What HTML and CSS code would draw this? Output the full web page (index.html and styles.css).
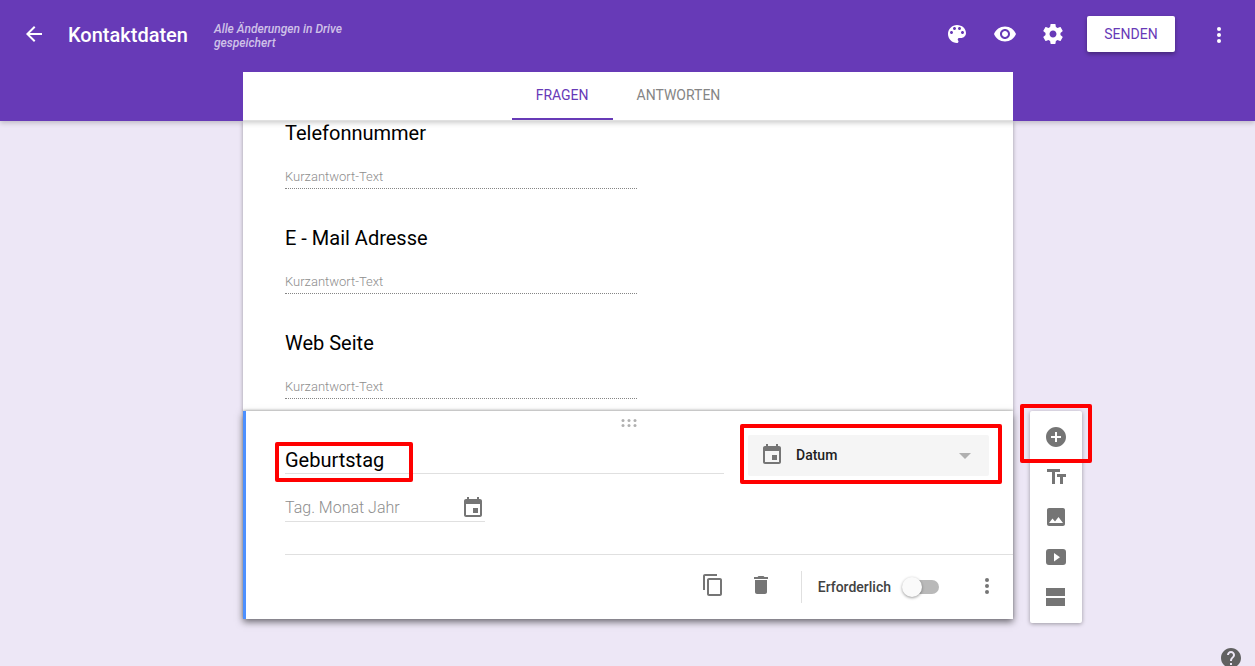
FILE: index.html
```
<!DOCTYPE html>
<html lang="de">
<head>
  <meta charset="UTF-8" />
  <meta name="viewport" content="width=device-width, initial-scale=1.0"/>
  <title>Kontaktdaten</title>
  <link rel="stylesheet" href="styles.css">
</head>
<body>
  <header class="header">
    <div class="topbar">
      <button class="icon-btn" type="button" aria-label="Zurück">
        <svg viewBox="0 0 24 24"><path d="M20 11H7.83l5.59-5.59L12 4l-8 8 8 8 1.41-1.41L7.83 13H20v-2z"/></svg>
      </button>
      <h1 class="form-name">Kontaktdaten</h1>
      <p class="save-status">Alle Änderungen in Drive gespeichert</p>

      <div class="tools">
        <button class="icon-btn" type="button" aria-label="Farbpalette">
          <svg viewBox="0 0 24 24"><path d="M12 3c-4.970 0-9 4.030-9 9s4.030 9 9 9c.83 0 1.500-.67 1.500-1.500 0-.39-.15-.74-.39-1.010-.23-.26-.38-.61-.38-.99 0-.83.67-1.500 1.500-1.500H16c2.760 0 5-2.240 5-5 0-4.420-4.030-8-9-8zm-5.500 9c-.83 0-1.500-.67-1.500-1.500S5.670 9 6.500 9 8 9.670 8 10.500 7.330 12 6.500 12zm3-4C8.670 8 8 7.330 8 6.500S8.670 5 9.500 5s1.500.67 1.500 1.500S10.330 8 9.500 8zm5 0c-.83 0-1.500-.67-1.500-1.500S13.670 5 14.500 5s1.500.67 1.500 1.500S15.330 8 14.500 8zm3 4c-.83 0-1.500-.67-1.500-1.500S16.670 9 17.500 9s1.500.67 1.500 1.500-.67 1.500-1.500 1.500z"/></svg>
        </button>
        <button class="icon-btn" type="button" aria-label="Vorschau">
          <svg viewBox="0 0 24 24"><path d="M12 4.500C7 4.500 2.730 7.610 1 12c1.730 4.390 6 7.500 11 7.500s9.270-3.110 11-7.500c-1.730-4.390-6-7.500-11-7.500zM12 17c-2.760 0-5-2.240-5-5s2.240-5 5-5 5 2.240 5 5-2.240 5-5 5zm0-8c-1.660 0-3 1.340-3 3s1.340 3 3 3 3-1.340 3-3-1.340-3-3-3z"/></svg>
        </button>
        <button class="icon-btn" type="button" aria-label="Einstellungen">
          <svg viewBox="0 0 24 24"><path d="M19.430 12.980c.04-.32.07-.64.07-.98s-.03-.66-.07-.98l2.110-1.650c.19-.15.24-.42.12-.64l-2-3.460c-.12-.22-.39-.3-.61-.22l-2.490 1c-.52-.4-1.080-.73-1.690-.98l-.38-2.650C14.460 2.180 14.250 2 14 2h-4c-.25 0-.46.18-.49.42l-.38 2.650c-.61.25-1.170.59-1.690.98l-2.490-1c-.23-.09-.49 0-.61.22l-2 3.460c-.13.22-.07.49.12.64l2.110 1.650c-.04.32-.07.65-.07.98s.03.66.07.98l-2.110 1.650c-.19.15-.24.42-.12.64l2 3.460c.12.22.39.3.61.22l2.490-1c.52.4 1.080.73 1.690.98l.38 2.650c.03.24.24.42.49.42h4c.25 0 .46-.18.49-.42l.38-2.650c.61-.25 1.170-.59 1.690-.98l2.490 1c.23.09.49 0 .61-.22l2-3.460c.12-.22.07-.49-.12-.64l-2.110-1.650zM12 15.500c-1.930 0-3.500-1.570-3.500-3.500s1.570-3.500 3.500-3.500 3.500 1.570 3.500 3.500-1.570 3.500-3.500 3.500z"/></svg>
        </button>
      </div>
      <button class="send-btn" type="button">SENDEN</button>
      <button class="icon-btn" type="button" aria-label="Mehr">
        <svg viewBox="0 0 24 24"><circle cx="12" cy="7" r="2"/><circle cx="12" cy="13" r="2"/><circle cx="12" cy="19" r="2"/></svg>
      </button>
    </div>

    <div class="columns">
      <nav class="tabs">
        <a class="tab active" href="#fragen">FRAGEN</a>
        <a class="tab" href="#antworten">ANTWORTEN</a>
      </nav>
    </div>
  </header>

  <main class="columns" id="fragen">
    <section class="questions">
      <div class="question">
        <label for="telefon">Telefonnummer</label>
        <input id="telefon" type="text" placeholder="Kurzantwort-Text" readonly>
      </div>
      <div class="question">
        <label for="email">E - Mail Adresse</label>
        <input id="email" type="text" placeholder="Kurzantwort-Text" readonly>
      </div>
      <div class="question">
        <label for="web">Web Seite</label>
        <input id="web" type="text" placeholder="Kurzantwort-Text" readonly>
      </div>
    </section>

    <section class="card">
      <div class="drag-handle">
        <svg viewBox="0 0 16 8">
          <circle cx="2" cy="1.500" r="1.500"/><circle cx="8" cy="1.500" r="1.500"/><circle cx="14" cy="1.500" r="1.500"/>
          <circle cx="2" cy="6.500" r="1.500"/><circle cx="8" cy="6.500" r="1.500"/><circle cx="14" cy="6.500" r="1.500"/>
        </svg>
      </div>

      <div class="card-top">
        <div class="title-field">
          <input type="text" value="Geburtstag" aria-label="Frage">
          <span class="mark mark-title"></span>
        </div>
        <div class="type-field">
          <svg class="type-icon" viewBox="0 0 24 24"><path d="M17 12h-5v5h5v-5zM16 1v2H8V1H6v2H5c-1.100 0-2 .9-2 2v14c0 1.100.9 2 2 2h14c1.100 0 2-.9 2-2V5c0-1.100-.9-2-2-2h-1V1h-2zm3 18H5V8h14v11z"/></svg>
          <select aria-label="Fragetyp">
            <option>Datum</option>
            <option>Kurzantwort</option>
          </select>
          <svg class="type-arrow" viewBox="0 0 12 6"><path d="M0 0h12L6 6z"/></svg>
          <span class="mark mark-type"></span>
        </div>
      </div>

      <div class="date-field">
        <input type="text" placeholder="Tag. Monat Jahr" aria-label="Datum" readonly>
        <svg viewBox="0 0 24 24"><path d="M17 12h-5v5h5v-5zM16 1v2H8V1H6v2H5c-1.100 0-2 .9-2 2v14c0 1.100.9 2 2 2h14c1.100 0 2-.9 2-2V5c0-1.100-.9-2-2-2h-1V1h-2zm3 18H5V8h14v11z"/></svg>
      </div>

      <div class="card-footer">
        <div class="card-actions">
          <button class="icon-btn" type="button" aria-label="Duplizieren">
            <svg viewBox="0 0 24 24"><path d="M16 1H4c-1.100 0-2 .9-2 2v14h2V3h12V1zm3 4H8c-1.100 0-2 .9-2 2v14c0 1.100.9 2 2 2h11c1.100 0 2-.9 2-2V7c0-1.100-.9-2-2-2zm0 16H8V7h11v14z"/></svg>
          </button>
          <button class="icon-btn" type="button" aria-label="Löschen">
            <svg viewBox="0 0 24 24"><path d="M6 19c0 1.100.9 2 2 2h8c1.100 0 2-.9 2-2V7H6v12zM19 4h-3.500l-1-1h-5l-1 1H5v2h14V4z"/></svg>
          </button>
        </div>
        <label class="required">
          Erforderlich
          <input class="switch" type="checkbox">
        </label>
        <button class="icon-btn" type="button" aria-label="Weitere Optionen">
          <svg viewBox="0 0 24 24"><circle cx="12" cy="5" r="2"/><circle cx="12" cy="11" r="2"/><circle cx="12" cy="17" r="2"/></svg>
        </button>
      </div>
    </section>

    <aside class="toolbar">
      <button class="icon-btn" type="button" aria-label="Frage hinzufügen">
        <svg viewBox="0 0 24 24"><path d="M12 2C6.480 2 2 6.480 2 12s4.480 10 10 10 10-4.480 10-10S17.520 2 12 2zm5 11h-4v4h-2v-4H7v-2h4V7h2v4h4v2z"/></svg>
      </button>
      <button class="icon-btn" type="button" aria-label="Titel hinzufügen">
        <svg viewBox="0 0 24 24"><path d="M3 4v3h5v12h3V7h5V4zM13 9v3h3v7h3v-7h3V9z"/></svg>
      </button>
      <button class="icon-btn" type="button" aria-label="Bild hinzufügen">
        <svg viewBox="0 0 24 24"><path d="M21 19V5c0-1.100-.9-2-2-2H5c-1.100 0-2 .9-2 2v14c0 1.100.9 2 2 2h14c1.100 0 2-.9 2-2zM8.500 13.500l2.500 3L14.500 12l4.500 6H5l3.500-4.500z"/></svg>
      </button>
      <button class="icon-btn" type="button" aria-label="Video hinzufügen">
        <svg viewBox="0 0 24 24"><path d="M5 4h14q3 0 3 3v10q0 3-3 3H5q-3 0-3-3V7q0-3 3-3zM10 8v8.500l6-4.200z"/></svg>
      </button>
      <button class="icon-btn" type="button" aria-label="Abschnitt hinzufügen">
        <svg viewBox="0 0 24 24"><path d="M2 3h19v8H2zM2 13h19v8H2z"/></svg>
      </button>
      <span class="mark mark-add"></span>
    </aside>
  </main>

  <button class="icon-btn help-btn" type="button" aria-label="Hilfe">
    <svg viewBox="0 0 24 24"><path d="M12 2C6.480 2 2 6.480 2 12s4.480 10 10 10 10-4.480 10-10S17.520 2 12 2zm1 17h-2v-2h2v2zm2.070-7.750l-.9.92C13.450 12.900 13 13.500 13 15h-2v-.5c0-1.100.45-2.100 1.170-2.830l1.240-1.260c.37-.36.59-.86.59-1.410 0-1.100-.9-2-2-2s-2 .9-2 2H8c0-2.210 1.790-4 4-4s4 1.790 4 4c0 .88-.36 1.680-.93 2.250z"/></svg>
  </button>
</body>
</html>
```

FILE: styles.css
```
* {
  box-sizing: border-box;
}

body {
  font-family: Roboto, Arial, sans-serif;
  font-size: 14px;
  background-color: #ede7f6;
  min-height: 100vh;
  margin: 0;
}

button,
input,
select {
  font-family: inherit;
  margin: 0;
  padding: 0;
  border: none;
  border-radius: 0;
  outline: none;
  background: none;
}

svg {
  display: block;
  fill: currentColor;
}

.icon-btn {
  display: flex;
  align-items: center;
  justify-content: center;
  color: #757575;
  cursor: pointer;
}

.icon-btn svg {
  width: 24px;
  height: 24px;
}

/* centre column shared by the tabs and the form */
.columns {
  display: grid;
  grid-template-columns: 1fr minmax(0, 770px) 1fr;
  padding-left: 1px;
}

/* header */
.header {
  position: relative;
  z-index: 2;
  background-color: #673ab7;
  color: white;
  box-shadow: 0 2px 5px rgba(0,0,0,0.2);
}

.header .icon-btn {
  color: white;
}

.topbar {
  display: flex;
  align-items: center;
  height: 72px;
  padding: 0 24px 4px 22px;
}

.form-name {
  margin: 2px 26px 0 22px;
  font-size: 20px;
  font-weight: 500;
}

.save-status {
  width: 136px;
  margin: 4px auto 0 0;
  font-size: 12px;
  font-style: italic;
  font-weight: 500;
  line-height: 14px;
  color: rgba(255,255,255,0.7);
}

.tools {
  display: flex;
  gap: 24px;
}

.send-btn {
  width: 88px;
  height: 36px;
  margin: 0 32px 0 22px;
  border-radius: 2px;
  background-color: white;
  color: #673ab7;
  font-size: 14px;
  font-weight: 400;
  box-shadow: 0 2px 4px rgba(0,0,0,0.35);
  cursor: pointer;
}

.tabs {
  grid-column: 2;
  display: flex;
  justify-content: center;
  background-color: white;
  border-bottom: 1px solid #e0e0e0;
}

.tab {
  padding: 0 24px;
  border-bottom: 2px solid transparent;
  line-height: 46px;
  color: #858585;
  text-decoration: none;
}

.tab.active {
  color: #673ab7;
  border-color: #673ab7;
}

/* questions */
.questions {
  grid-column: 2;
  padding: 0 42px 12px;
  background-color: white;
  box-shadow: 0 1px 4px rgba(0,0,0,0.35);
}

.question {
  margin-bottom: 37px;
}

.question:last-child {
  margin-bottom: 0;
}

.question label {
  display: block;
  margin-bottom: 20px;
  font-size: 20px;
  line-height: 24px;
  color: black;
}

.question input {
  display: block;
  width: 352px;
  height: 24px;
  border-bottom: 1px dotted #858585;
  font-size: 13px;
  font-weight: 300;
}

input::placeholder {
  color: #8e8e8e;
  opacity: 1;
}

/* selected question */
.card {
  grid-column: 2;
  position: relative;
  padding-left: 39px;
  border-left: 3px solid #4d90fe;
  background-color: white;
  box-shadow: 0 -1px 2px rgba(0,0,0,0.2), 0 3px 7px rgba(0,0,0,0.55);
}

.drag-handle {
  display: flex;
  align-items: center;
  justify-content: center;
  height: 24px;
  padding-right: 41px;
}

.drag-handle svg {
  width: 16px;
  height: 8px;
  color: #b0b0b0;
}

.card-top {
  display: flex;
  gap: 24px;
  padding-right: 24px;
}

.title-field {
  position: relative;
  flex: 1;
}

.title-field input {
  display: block;
  width: 100%;
  height: 39px;
  padding-top: 12px;
  border-bottom: 1px solid #e0e0e0;
  font-size: 20px;
  color: black;
}

.type-field {
  position: relative;
  width: 241px;
}

.type-field select {
  appearance: none;
  display: block;
  width: 100%;
  height: 41px;
  padding: 0 48px 2px;
  border-radius: 2px;
  background-color: #f5f5f5;
  color: #212121;
  font-size: 14px;
  font-weight: 500;
}

.type-icon {
  position: absolute;
  top: 8px;
  left: 12px;
  width: 24px;
  height: 24px;
  color: #757575;
}

.type-arrow {
  position: absolute;
  top: 18px;
  right: 18px;
  width: 12px;
  height: 6px;
  color: #b0b0b0;
}

.date-field {
  display: flex;
  align-items: center;
  width: 200px;
  height: 28px;
  margin-top: 18px;
  border-bottom: 1px solid #e0e0e0;
}

.date-field input {
  flex: 1;
  min-width: 0;
  font-size: 16px;
  font-weight: 300;
}

.date-field svg {
  width: 24px;
  height: 24px;
  color: #757575;
}

.card-footer {
  display: flex;
  align-items: center;
  justify-content: flex-end;
  height: 65px;
  margin-top: 32px;
  padding-right: 14px;
  border-top: 1px solid #e0e0e0;
}

.card-actions {
  display: flex;
  gap: 24px;
  margin-right: 28px;
  padding-bottom: 4px;
}

.required {
  display: flex;
  align-items: center;
  height: 32px;
  margin-right: 36px;
  padding-left: 16px;
  border-left: 1px solid #e0e0e0;
  font-weight: 500;
  color: #424242;
}

.switch {
  appearance: none;
  position: relative;
  width: 36px;
  height: 14px;
  margin-left: 12px;
  border-radius: 7px;
  background-color: #b9b9b9;
}

.switch::before {
  content: "";
  position: absolute;
  top: -3px;
  left: -1px;
  width: 20px;
  height: 20px;
  border-radius: 50%;
  background-color: #fafafa;
  box-shadow: 0 1px 3px rgba(0,0,0,0.4);
}

/* side toolbar */
.toolbar {
  position: relative;
  width: 52px;
  margin-left: 17px;
  margin-bottom: -4px;
  padding: 6px;
  border-radius: 2px;
  background-color: white;
  box-shadow: 0 1px 4px rgba(0,0,0,0.35);
}

.toolbar .icon-btn {
  width: 40px;
  height: 40px;
}

.help-btn {
  position: fixed;
  right: 12px;
  bottom: -4px;
  color: #616161;
}

/* red frames around the highlighted controls */
.mark {
  position: absolute;
  border: 4px solid #ff0000;
  border-radius: 2px;
  pointer-events: none;
}

.mark-title {
  top: 7px;
  left: -10px;
  width: 138px;
  height: 40px;
}

.mark-type {
  top: -11px;
  right: -13px;
  bottom: -8px;
  left: -8px;
}

.mark-add {
  top: -7px;
  right: -10px;
  left: -10px;
  height: 59px;
}
```
